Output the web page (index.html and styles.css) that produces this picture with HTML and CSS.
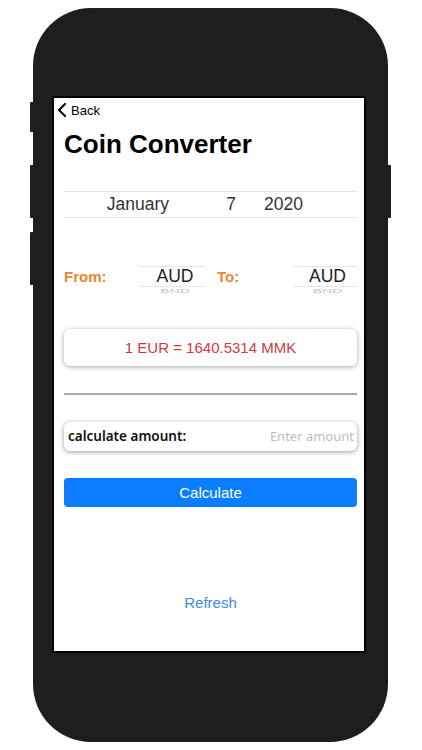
FILE: index.html
```html
<!DOCTYPE html>
<html lang="en">
<head>
<meta charset="utf-8">
<title>Coin Converter</title>
<link rel="stylesheet" href="styles.css">
</head>
<body>
<div class="device">
  <div class="btn btn-mute"></div>
  <div class="btn btn-vol-up"></div>
  <div class="btn btn-vol-down"></div>
  <div class="btn btn-power"></div>
  <div class="screen">
    <div class="nav">
      <svg class="chevron" width="10" height="14" viewBox="0 0 10 14"><path d="M8 1 L2 7 L8 13" fill="none" stroke="#000" stroke-width="2" stroke-linecap="round" stroke-linejoin="round"/></svg>
      <span class="back">Back</span>
    </div>
    <div class="content">
      <h1 class="title">Coin Converter</h1>
      <div class="date-picker">
        <span class="month">January</span>
        <span class="day">7</span>
        <span class="year">2020</span>
      </div>
      <div class="currency-row">
        <div class="label">From:</div>
        <div class="wheel">
          <div class="sel">AUD</div>
          <div class="next">BND</div>
        </div>
        <div class="label label-to">To:</div>
        <div class="wheel">
          <div class="sel">AUD</div>
          <div class="next">BND</div>
        </div>
      </div>
      <div class="rate-box">1 EUR = 1640.5314 MMK</div>
      <div class="divider"></div>
      <div class="amount-box">
        <span class="amount-label">calculate amount:</span>
        <span class="amount-placeholder">Enter amount</span>
      </div>
      <div class="calc-btn">Calculate</div>
      <div class="refresh">Refresh</div>
    </div>
  </div>
</div>
</body>
</html>
```
FILE: styles.css
```css
* { box-sizing: border-box; }
html, body { margin: 0; padding: 0; background: #fff; }
body { font-family: "Liberation Sans", Arial, sans-serif; }

.device {
  position: relative;
  margin: 8px 0 0 33px;
  width: 355px;
  height: 734px;
  background: #1e1e1e;
  border-radius: 58px;
  padding: 88px 0 0 19px;
}
.btn { position: absolute; width: 4px; background: #1e1e1e; border-radius: 1px; }
.btn-mute { left: -3px; top: 94px; height: 30px; }
.btn-vol-up { left: -3px; top: 157px; height: 53px; }
.btn-vol-down { left: -3px; top: 224px; height: 53px; }
.btn-power { right: -3px; top: 157px; height: 53px; }

.screen {
  width: 314px;
  height: 557px;
  border: 2px solid #000;
  background: #fff;
  display: flex;
  flex-direction: column;
}
.nav {
  height: 24px;
  display: flex;
  align-items: center;
  padding-left: 3px;
  gap: 4px;
}
.chevron { display: block; }
.back { font-size: 13px; color: #000; }

.content {
  padding: 0 7px 0 10px;
  display: flex;
  flex-direction: column;
}
.title {
  margin: 7px 0 0 0;
  font-size: 26px;
  line-height: 30px;
  font-weight: bold;
  color: #000;
}
.date-picker {
  margin-top: 32px;
  height: 27px;
  border-top: 1px solid #e4e4e4;
  border-bottom: 1px solid #e4e4e4;
  display: grid;
  grid-template-columns: 105px 67px 1fr;
  align-items: center;
  font-size: 17.5px;
  color: #333;
}
.month, .day { text-align: right; }
.year { padding-left: 28px; }

.currency-row {
  margin-top: 48px;
  height: 28px;
  display: grid;
  grid-template-columns: 76px 65px 88px 64px;
  align-items: start;
}
.label {
  font-size: 15px;
  font-weight: bold;
  color: #e8872f;
  line-height: 21px;
}
.label-to { padding-left: 12px; }
.wheel { height: 28px; }
.sel {
  height: 21px;
  border-top: 1px solid #e6e6e6;
  border-bottom: 1px solid #e6e6e6;
  text-align: center;
  padding-left: 5px;
  font-size: 17.5px;
  line-height: 19px;
  color: #222;
}
.next {
  text-align: center;
  padding-left: 5px;
  font-size: 14px;
  line-height: 14px;
  height: 14px;
  color: #c4c4c4;
  transform: scaleY(0.42);
  transform-origin: top;
  margin-top: 1px;
}

.rate-box {
  margin-top: 35px;
  height: 37px;
  border-radius: 6px;
  background: #fff;
  box-shadow: 0 1px 5px rgba(0, 0, 0, 0.35);
  display: flex;
  align-items: center;
  justify-content: center;
  font-size: 15px;
  color: #d0393f;
}
.divider {
  margin-top: 27px;
  height: 1.5px;
  background: #a8a8a8;
}
.amount-box {
  margin-top: 27px;
  height: 29px;
  border-radius: 6px;
  background: #fff;
  box-shadow: 0 1px 5px rgba(0, 0, 0, 0.4);
  display: flex;
  align-items: center;
  justify-content: space-between;
  padding: 0 3px 0 4px;
  font-family: "Noto Sans", sans-serif;
}
.amount-label { font-size: 13.5px; font-weight: 600; color: #111; }
.amount-placeholder { font-size: 13px; color: #bdbdc2; }

.calc-btn {
  margin-top: 27px;
  height: 29px;
  border-radius: 4px;
  background: #0b7dff;
  color: #fff;
  font-size: 15px;
  display: flex;
  align-items: center;
  justify-content: center;
}
.refresh {
  margin-top: 86px;
  line-height: 20px;
  text-align: center;
  font-size: 15px;
  color: #3a8ee0;
}
```
